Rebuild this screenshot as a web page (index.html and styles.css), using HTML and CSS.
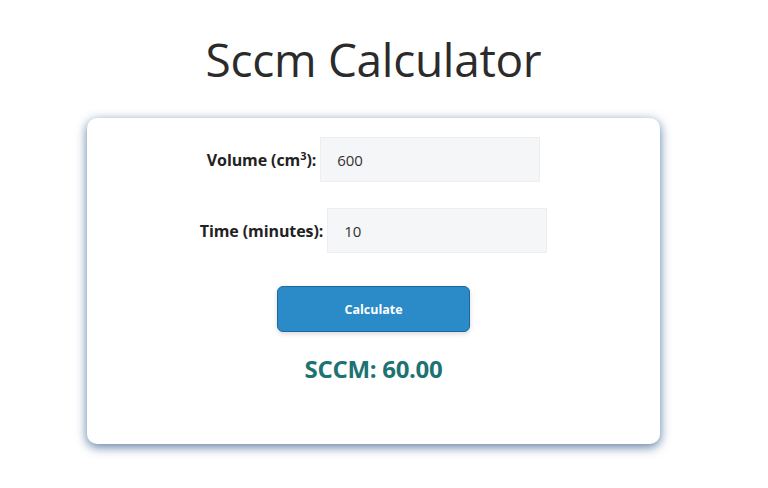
FILE: index.html
```html
<!doctype html>
<html lang="en">

<head>
  <meta charset="UTF-8" />
  <meta name="viewport" content="width=device-width, initial-scale=1.0" />
  <title>Sccm Calculator</title>
  <link rel="stylesheet" href="styles.css">
</head>

<body>
  <div class="page">
    <h1 class="title">Sccm Calculator</h1>

    <div class="card">
      <div class="row">
        <label for="volume">Volume (cm<sup>3</sup>):</label>
        <input type="text" id="volume" value="600">
      </div>
      <div class="row">
        <label for="time">Time (minutes):</label>
        <input type="text" id="time" value="10">
      </div>
      <button class="calc-btn">Calculate</button>
      <div class="result">SCCM: 60.00</div>
    </div>
  </div>
</body>

</html>
```

FILE: styles.css
```css
* {
  margin: 0;
  padding: 0;
  box-sizing: border-box;
  font-family: 'Open Sans', 'Noto Sans', sans-serif;
}

body {
  background: #fff;
  color: #222;
  padding-right: 21px;
}

.page {
  display: flex;
  flex-direction: column;
  align-items: center;
  padding: 28px 0 44px;
}

.title {
  font-size: 46px;
  font-weight: 400;
  color: #2b2b2b;
  line-height: 62px;
  letter-spacing: -0.3px;
}

.card {
  margin-top: 28px;
  width: 573px;
  height: 326px;
  background: #fff;
  border-radius: 10px;
  box-shadow: 0 3px 11px rgba(50, 90, 140, 0.8);
  display: flex;
  flex-direction: column;
  align-items: center;
  padding-top: 19px;
}

.row {
  display: flex;
  align-items: center;
  gap: 4px;
  margin-bottom: 26px;
}

.row label {
  font-size: 16px;
  font-weight: 700;
  color: #222;
  letter-spacing: -0.1px;
}

.row label sup {
  font-size: 11px;
  line-height: 0;
}

.row input {
  width: 220px;
  height: 45px;
  padding: 0 16px;
  font-size: 15px;
  color: #333;
  background: #f5f6f8;
  border: 1px solid #eceef1;
  outline: none;
}

.calc-btn {
  margin-top: 7px;
  width: 193px;
  height: 46px;
  border: 1px solid #1d67a0;
  border-radius: 6px;
  background: #2a8bc8;
  color: #fff;
  font-size: 12.5px;
  font-weight: 700;
  box-shadow: 0 2px 5px rgba(0, 0, 0, 0.15);
  cursor: pointer;
}

.result {
  margin-top: 20px;
  font-size: 24px;
  font-weight: 700;
  color: #1d7272;
  letter-spacing: -0.3px;
}
```
